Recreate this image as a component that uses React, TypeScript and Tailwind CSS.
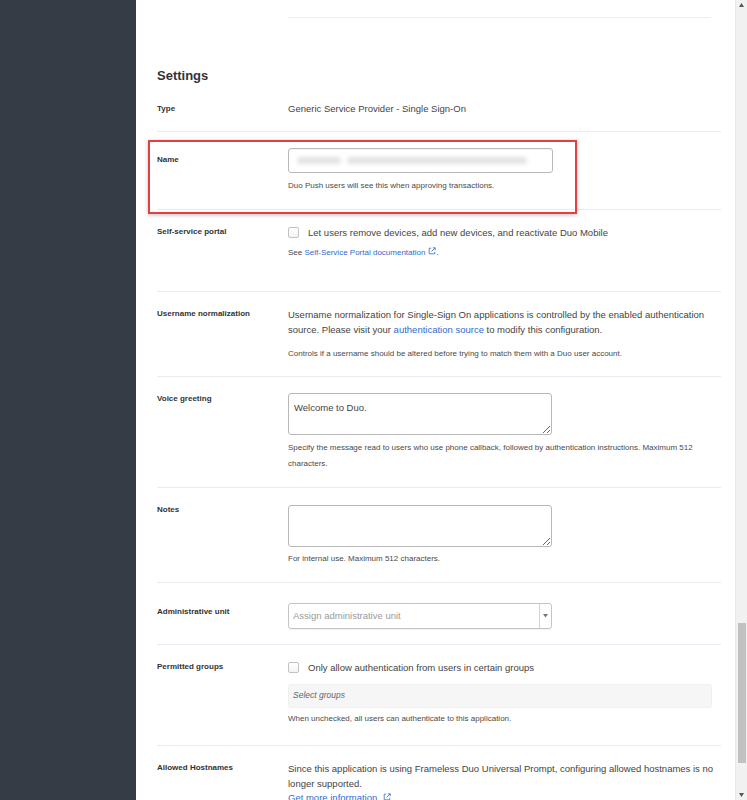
import React from "react";

function ExtIcon() {
  return (
    <svg width="8" height="8" viewBox="0 0 10 10" className="inline-block ml-[3px] align-baseline" fill="none" stroke="#2f6bd0" strokeWidth="1">
      <path d="M4 1.5H1.5v7h7V6" />
      <path d="M6 1h3v3" />
      <path d="M9 1L4.5 5.5" />
    </svg>
  );
}

function Checkbox() {
  return (
    <span className="inline-block w-[11px] h-[11px] shrink-0 rounded-[2px] border border-[#c2c2c2] bg-gradient-to-b from-white to-[#f4f4f4]" />
  );
}

function Row({
  label,
  labelPad,
  contentPad,
  rowPad,
  children,
  last,
}: {
  label: string;
  labelPad: string;
  contentPad: string;
  rowPad: string;
  children: React.ReactNode;
  last?: boolean;
}) {
  return (
    <div className={`flex ${last ? "" : "border-b border-[#e6ecf1]"} ${rowPad}`}>
      <div className={`w-[131px] shrink-0 font-bold text-[8px] leading-[12px] text-[#333] ${labelPad}`}>{label}</div>
      <div className={`flex-1 min-w-0 ${contentPad}`}>{children}</div>
    </div>
  );
}

const help = "text-[8px] leading-[12px] text-[#4a4a4a]";
const body = "text-[9.5px] leading-[15px] text-[#444]";

export default function App() {
  return (
    <div className="flex h-[800px] w-full overflow-hidden bg-white font-['Liberation_Sans',Arial,sans-serif]">
      <div className="w-[136px] shrink-0 bg-[#353c46]" />
      <div className="flex-1 min-w-0 pl-[21px] pr-[14px]">
        <div className="mt-[17px] h-px bg-[#eceff2] ml-[131px] mr-[10px]" />
        <h2 className="mt-[50px] text-[13px] leading-[16px] font-bold text-[#333]">Settings</h2>

        <Row label="Type" labelPad="pt-[19px]" contentPad="pt-[17px]" rowPad="pb-[15px]">
          <div className={body}>Generic Service Provider - Single Sign-On</div>
        </Row>

        <div className="relative">
          <Row label="Name" labelPad="pt-[22px]" contentPad="pt-[16px]" rowPad="pb-[17px]">
            <div className="relative w-[265px] h-[25px] rounded-[3px] border border-[#b9b9b9] bg-white shadow-[inset_0_1px_1px_rgba(0,0,0,0.06)] overflow-hidden">
              <div className="absolute left-[8px] top-[8px] h-[7px] w-[44px] rounded-full bg-[#e2e2e2] blur-[2px]" />
              <div className="absolute left-[58px] top-[8px] h-[7px] w-[180px] rounded-full bg-[#e2e2e2] blur-[2px]" />
            </div>
            <div className={`mt-[7px] ${help}`}>Duo Push users will see this when approving transactions.</div>
          </Row>
          <div className="absolute left-[-9px] top-[8px] w-[429px] h-[74px] border-2 border-[#e0403f] shadow-[0_1px_4px_rgba(0,0,0,0.25)] pointer-events-none" />
        </div>

        <Row label="Self-service portal" labelPad="pt-[16px]" contentPad="pt-[15px]" rowPad="pb-[32px]">
          <div className={`flex items-center gap-[9px] ${body}`}>
            <Checkbox />
            <span>Let users remove devices, add new devices, and reactivate Duo Mobile</span>
          </div>
          <div className={`mt-[7px] ${help}`}>
            See <span className="text-[#2f6bd0]">Self-Service Portal documentation</span>
            <ExtIcon />.
          </div>
        </Row>

        <Row label="Username normalization" labelPad="pt-[16px]" contentPad="pt-[15px]" rowPad="pb-[16.5px]">
          <div className={body}>
            Username normalization for Single-Sign On applications is controlled by the enabled authentication source. Please visit your{" "}
            <span className="text-[#2f6bd0]">authentication source</span> to modify this configuration.
          </div>
          <div className={`mt-[10.5px] ${help}`}>Controls if a username should be altered before trying to match them with a Duo user account.</div>
        </Row>

        <Row label="Voice greeting" labelPad="pt-[16px]" contentPad="pt-[16px]" rowPad="pb-[15px]">
          <textarea
            readOnly
            defaultValue="Welcome to Duo."
            className="block w-[264px] h-[42px] rounded-[3px] border border-[#b9b9b9] bg-white px-[5px] pt-[6px] text-[9.5px] leading-[15px] text-[#444] outline-none font-['Liberation_Sans',Arial,sans-serif]"
          />
          <div className="mt-[5px] text-[8px] leading-[16px] text-[#4a4a4a]">
            Specify the message read to users who use phone callback, followed by authentication instructions. Maximum 512 characters.
          </div>
        </Row>

        <Row label="Notes" labelPad="pt-[16px]" contentPad="pt-[17px]" rowPad="pb-[17px]">
          <textarea
            readOnly
            className="block w-[264px] h-[42px] rounded-[3px] border border-[#b9b9b9] bg-white px-[5px] pt-[5px] text-[9.5px] outline-none"
          />
          <div className={`mt-[6px] ${help}`}>For internal use. Maximum 512 characters.</div>
        </Row>

        <Row label="Administrative unit" labelPad="pt-[23px]" contentPad="pt-[20px]" rowPad="pb-[15px]">
          <div className="flex w-[264px] h-[26px] rounded-[3px] border border-[#c4c4c4] bg-white shadow-[0_1px_1px_rgba(0,0,0,0.05)]">
            <div className="flex-1 flex items-center pl-[4px] pt-px text-[9.5px] text-[#9a9a9a]">Assign administrative unit</div>
            <div className="w-[12px] border-l border-[#d4d4d4] flex items-center justify-center">
              <svg width="5" height="4" viewBox="0 0 5 4"><path d="M0 0h5L2.5 3.5z" fill="#777" /></svg>
            </div>
          </div>
        </Row>

        <Row label="Permitted groups" labelPad="pt-[16px]" contentPad="pt-[15px]" rowPad="pb-[20.5px]">
          <div className={`flex items-center gap-[9px] ${body}`}>
            <Checkbox />
            <span>Only allow authentication from users in certain groups</span>
          </div>
          <div className="mt-[8.5px] mr-[9px] h-[24px] rounded-[3px] border border-[#efefef] bg-[#f6f6f6] flex items-center pl-[4px] text-[8.5px] italic text-[#666]">
            Select groups
          </div>
          <div className={`mt-[5px] ${help}`}>When unchecked, all users can authenticate to this application.</div>
        </Row>

        <Row label="Allowed Hostnames" labelPad="pt-[16px]" contentPad="pt-[15px]" rowPad="pb-[20px]" last>
          <div className={body}>
            Since this application is using Frameless Duo Universal Prompt, configuring allowed hostnames is no longer supported.
          </div>
          <div className="text-[9.5px] leading-[14px] text-[#2f6bd0]">
            Get more information <ExtIcon />
          </div>
        </Row>
      </div>
      <div className="relative w-[12px] shrink-0 bg-[#f1f1f1] border-l border-[#e8e8e8]">
        <svg className="absolute left-[3px] top-[3px]" width="5" height="4" viewBox="0 0 5 4"><path d="M2.5 0L5 4H0z" fill="#555" /></svg>
        <div className="absolute left-[2px] top-[623px] w-[8px] h-[140px] bg-[#c1c1c1]" />
        <svg className="absolute left-[3px] bottom-[3px]" width="5" height="4" viewBox="0 0 5 4"><path d="M0 0h5L2.5 4z" fill="#555" /></svg>
      </div>
    </div>
  );
}
